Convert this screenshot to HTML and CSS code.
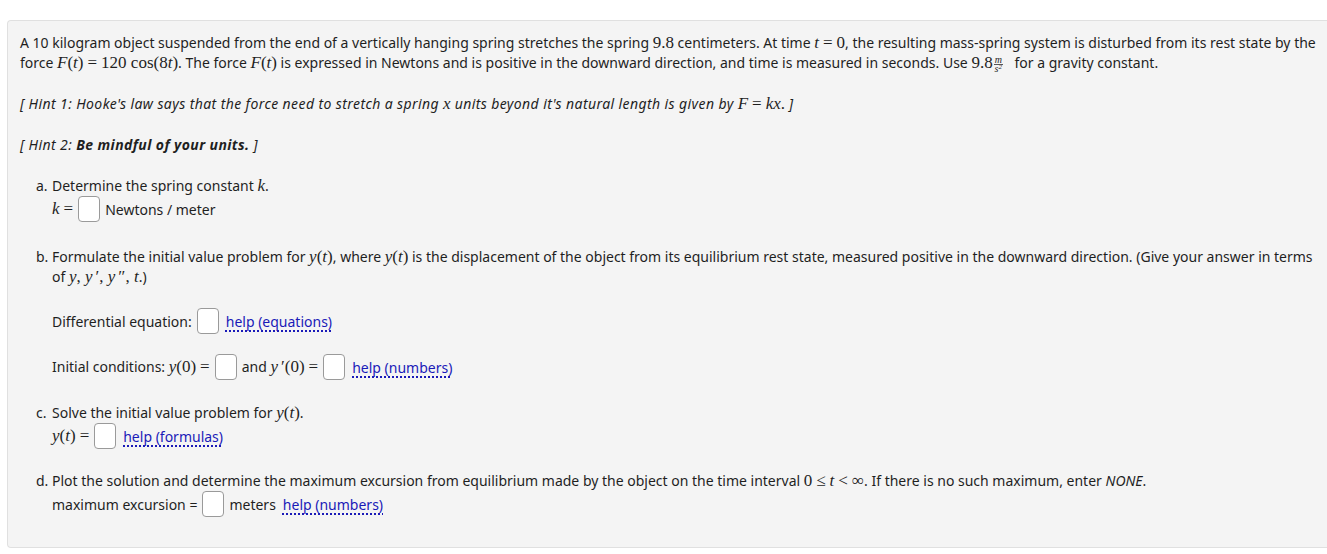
FILE: index.html
```html
<!DOCTYPE html>
<html>
<head>
<meta charset="utf-8">
<link rel="stylesheet" href="styles.css">
</head>
<body>
<div class="tick"></div>
<div class="problem">
  <p class="intro">A 10 kilogram object suspended from the end of a vertically hanging spring stretches the spring <span class="m">9.8</span> centimeters. At time <span class="m"><i>t</i><span class="rel">=</span>0</span>, the resulting mass-spring system is disturbed from its rest state by the force <span class="m"><i>F</i>(<i>t</i>)<span class="rel">=</span>120 cos(8<i>t</i>)</span>. The force <span class="m"><i>F</i>(<i>t</i>)</span> is expressed in Newtons and is positive in the downward direction, and time is measured in seconds. Use <span class="m">9.8</span><span class="frac"><span class="num">m</span><span class="den">s<sup>2</sup></span></span> for a gravity constant.</p>

  <p class="hint"><em>[ Hint 1: Hooke's law says that the force need to stretch a spring <span class="m"><i>x</i></span> units beyond it's natural length is given by <span class="m"><i>F</i><span class="rel">=</span><i>kx</i>.</span> ]</em></p>

  <p class="hint"><em>[ Hint 2: <b>Be mindful of your units.</b> ]</em></p>

  <div class="part">
    <div class="q"><span class="lbl">a.</span>Determine the spring constant <span class="m"><i>k</i></span>.</div>
    <div class="row"><span class="m"><i>k</i><span class="rel">=</span></span><span class="inp"></span><span>Newtons / meter</span></div>
  </div>

  <div class="part part-b">
    <div class="q"><span class="lbl">b.</span>Formulate the initial value problem for <span class="m"><i>y</i>(<i>t</i>)</span>, where <span class="m"><i>y</i>(<i>t</i>)</span> is the displacement of the object from its equilibrium rest state, measured positive in the downward direction. (Give your answer in terms of <span class="m"><i>y</i>, <i>y</i><span class="pr">′</span>, <i>y</i><span class="pr">″</span>, <i>t</i></span>.)</div>
    <div class="row row-de"><span>Differential equation:</span><span class="inp"></span><a class="help">help (equations)</a></div>
    <div class="row row-ic"><span>Initial conditions: <span class="m"><i>y</i>(0)<span class="rel">=</span></span></span><span class="inp"></span><span>and <span class="m"><i>y</i><span class="pr">′</span>(0)<span class="rel">=</span></span></span><span class="inp"></span><a class="help">help (numbers)</a></div>
  </div>

  <div class="part part-c">
    <div class="q"><span class="lbl">c.</span>Solve the initial value problem for <span class="m"><i>y</i>(<i>t</i>)</span>.</div>
    <div class="row"><span class="m"><i>y</i>(<i>t</i>)<span class="rel">=</span></span><span class="inp"></span><a class="help">help (formulas)</a></div>
  </div>

  <div class="part part-d">
    <div class="q"><span class="lbl">d.</span>Plot the solution and determine the maximum excursion from equilibrium made by the object on the time interval <span class="m">0<span class="rel">≤</span><i>t</i><span class="rel">&lt;</span>∞</span>. If there is no such maximum, enter <em>NONE</em>.</div>
    <div class="row"><span>maximum excursion =</span><span class="inp"></span><span>meters</span><a class="help">help (numbers)</a></div>
  </div>
</div>
</body>
</html>
```

FILE: styles.css
```css
html, body {
  margin: 0;
  padding: 0;
  background: #ffffff;
}
body {
  font-family: "Noto Sans", "Open Sans", sans-serif;
  font-size: 14px;
  color: #1f1f1f;
  padding: 0 0 0 7px;
}
.tick {
  height: 20px;
}
.problem {
  background: #f4f4f4;
  border: 1px solid #e0e0e0;
  border-right: none;
  border-radius: 4px 0 0 4px;
  padding: 12px 0 0 12px;
  box-sizing: border-box;
  height: 528px;
}
p {
  margin: 0;
}
.intro {
  line-height: 20px;
  padding-right: 6px;
}
.hint {
  line-height: 20px;
  margin-top: 21px;
}
.hint em {
  font-style: italic;
  letter-spacing: 0.4px;
}
.hint b {
  font-weight: 700;
}
.m {
  font-family: "Liberation Serif", "DejaVu Serif", serif;
  font-size: 17px;
  white-space: nowrap;
  font-style: normal;
  letter-spacing: 0;
}
.m i {
  font-style: italic;
}
.pr {
  margin-left: 3px;
}
.rel {
  margin: 0 4px;
}
.frac {
  display: inline-flex;
  flex-direction: column;
  align-items: center;
  vertical-align: top;
  height: 20px;
  padding-top: 3px;
  box-sizing: border-box;
  font-family: "Liberation Serif", serif;
  font-style: italic;
  font-size: 10px;
  line-height: 8px;
  margin: 0 8px 0 1px;
}
.frac .num {
  border-bottom: 1px solid #555;
  padding: 0 1px;
}
.frac sup {
  font-size: 7px;
  line-height: 0;
  vertical-align: 3px;
}
.part {
  margin-top: 21px;
  padding-left: 32px;
}
.q {
  line-height: 20px;
  padding-right: 14px;
}
.lbl {
  display: inline-block;
  width: 16px;
  margin-left: -16px;
}
.row {
  display: flex;
  align-items: center;
  gap: 5px;
  height: 26px;
}
.row .m .rel:last-child {
  margin-right: 0;
}
.inp {
  display: inline-block;
  width: 20px;
  height: 24px;
  border: 1px solid #9a9a9a;
  border-radius: 4px;
  background: #fff;
}
.help {
  color: #1a1ab8;
  text-decoration: underline dotted #1a1ab8;
  text-decoration-thickness: 2px;
  text-underline-offset: 4px;
  margin-left: 2px;
}
.part-b {
  margin-top: 25px;
}
.row-de {
  margin-top: 21px;
}
.row-ic {
  margin-top: 20px;
}
.part-c {
  margin-top: 23px;
}
.part-d {
  margin-top: 22px;
}
```
